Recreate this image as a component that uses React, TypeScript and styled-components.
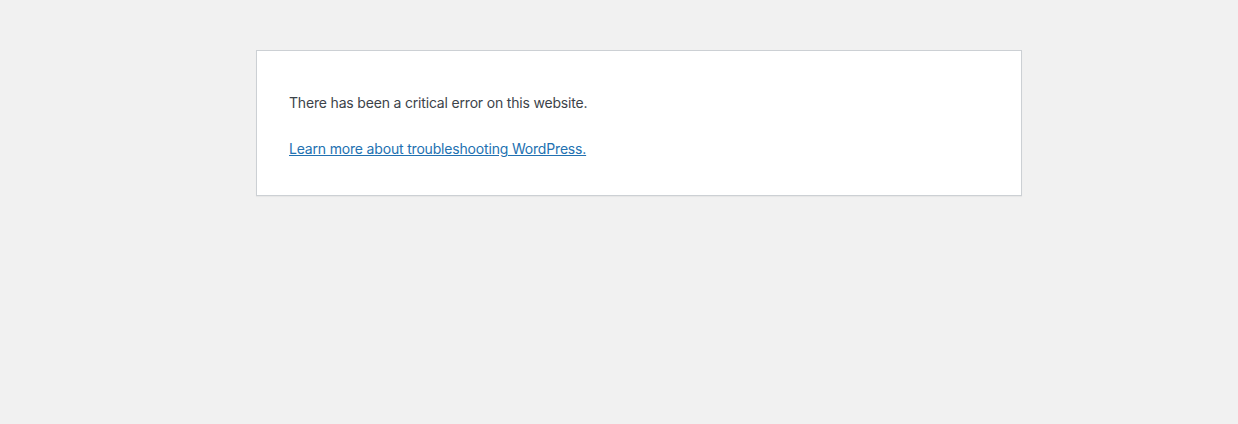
import { createGlobalStyle } from 'styled-components';
import styled from 'styled-components';

const GlobalStyle = createGlobalStyle`
	html,
	body {
		margin: 0;
		padding: 0;
		background: #f1f1f1;
	}

	body {
		font-family: Inter, 'Liberation Sans', sans-serif;
	}
`;

const Page = styled.div`
	min-height: 424px;
	padding: 50px 0 0 40px;
	box-sizing: border-box;
`;

const ErrorPage = styled.div`
	box-sizing: border-box;
	width: 766px;
	margin: 0 auto;
	padding: 16px 32px 16px;

	background: #fff;
	border: 1px solid #ccd0d4;
	box-shadow: 0 1px 1px rgb(0 0 0 / 0.04);

	color: #3c434a;
	font-size: 14px;
	line-height: 1.5;
	letter-spacing: -0.18px;
`;

const Message = styled.p`
	margin: 25px 0 20px;
`;

const HelpLink = styled.a`
	color: #2271b1;
	text-decoration: underline;
`;

export default function App() {
	return (
		<>
			<GlobalStyle />
			<Page>
				<ErrorPage>
					<Message>There has been a critical error on this website.</Message>
					<Message>
						<HelpLink href="#">
							Learn more about troubleshooting WordPress.
						</HelpLink>
					</Message>
				</ErrorPage>
			</Page>
		</>
	);
}
